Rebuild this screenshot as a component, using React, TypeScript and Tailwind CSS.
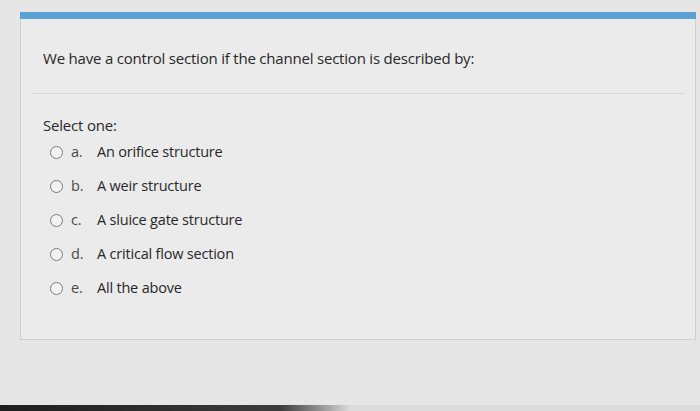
import React from 'react';

const OPTIONS = [
  { letter: 'a.', text: 'An orifice structure' },
  { letter: 'b.', text: 'A weir structure' },
  { letter: 'c.', text: 'A sluice gate structure' },
  { letter: 'd.', text: 'A critical flow section' },
  { letter: 'e.', text: 'All the above' },
];

export default function App() {
  return (
    <div
      className="flex h-[411px] w-[700px] flex-col overflow-hidden bg-[#e6e6e6] text-[#282828]"
      style={{ fontFamily: '"Open Sans", "Noto Sans", sans-serif' }}
    >
      <div className="flex flex-1 flex-col pl-[20px] pr-[4px] pt-[12px]">
        <div className="h-[7px] w-full bg-[#5ca1d4]" />
        <div className="flex h-[321px] flex-col border-x border-b border-[#cfcfcf] bg-[#ebebeb]">
          <div className="mx-[10px] border-b border-[#d8d8d8] pb-[23px] pl-[12px] pt-[28px] text-[15px] tracking-[-0.2px]">
            We have a control section if the channel section is described by:
          </div>
          <div className="pl-[22px] pt-[20px]">
            <div className="text-[15px] tracking-[-0.2px]">Select one:</div>
            <div className="mt-[5px] flex flex-col gap-[12px] pl-[7px]">
              {OPTIONS.map((o) => (
                <div key={o.letter} className="flex h-[22px] items-center text-[14.5px] tracking-[-0.2px]">
                  <span className="h-[13px] w-[13px] rounded-full border border-[#7a7a7a] bg-[#f2f2f2]" />
                  <span className="ml-[8px] w-[26px] text-[#4a4a4a]">{o.letter}</span>
                  <span>{o.text}</span>
                </div>
              ))}
            </div>
          </div>
        </div>
      </div>
      <div className="h-[6px] w-full bg-gradient-to-r from-[#1e1e1e] via-[#3c3c3c] via-40% to-[#dcdcdc] to-50%" />
    </div>
  );
}
